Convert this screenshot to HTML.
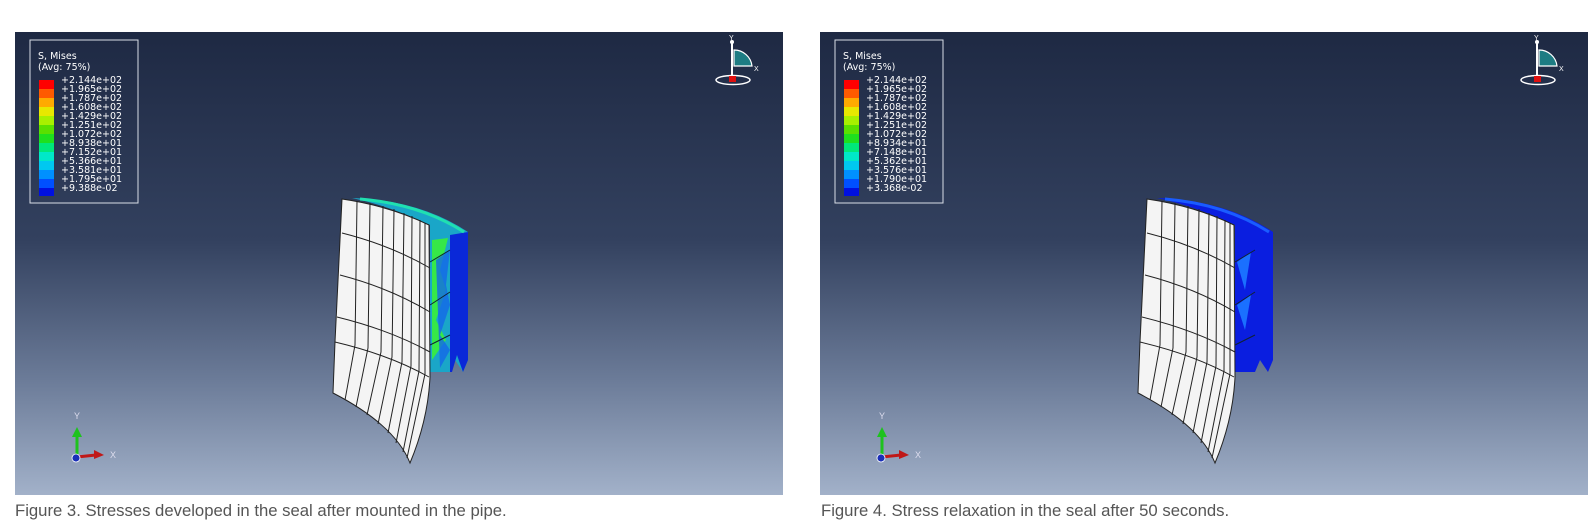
<!DOCTYPE html>
<html><head><meta charset="utf-8"><style>
html,body{margin:0;padding:0;background:#fff;}
body{width:1594px;height:523px;position:relative;overflow:hidden;}
svg{position:absolute;left:0;top:0;}
.cap{position:absolute;top:501px;font:16.7px "Liberation Sans",Arial,sans-serif;color:#555;white-space:nowrap;}
.lg{font:9.5px "DejaVu Sans","Liberation Sans",sans-serif;fill:#fff;}
</style></head><body>
<svg width="1594" height="523" viewBox="0 0 1594 523">
<defs>
<linearGradient id="bg" x1="0" y1="0" x2="0" y2="1">
<stop offset="0" stop-color="#1e2943"/>
<stop offset="0.45" stop-color="#33415f"/>
<stop offset="0.75" stop-color="#6b7b98"/>
<stop offset="1" stop-color="#a2b1c9"/>
</linearGradient>
<g id="sheet">
<path d="M342,199 Q390,206 429,225 L430,377 Q428,420 410,463 Q395,425 333,393 L335,342 Z" fill="#f4f4f4" stroke="#222" stroke-width="1"/>
<g stroke="#222" stroke-width="1" fill="none">
<path d="M342,233 Q390,245 430,268"/>
<path d="M340,275 Q390,288 430,312"/>
<path d="M337,317 Q390,330 430,352"/>
<path d="M335,342 Q390,355 429,377"/>
<path d="M357,201 L355,345 L345,400"/>
<path d="M370,203 L368,348 L356,407"/>
<path d="M383,206 L381,352 L367,415"/>
<path d="M394,209 L392,357 L378,424"/>
<path d="M404,213 L402,362 L388,433"/>
<path d="M412,216 L411,366 L396,443"/>
<path d="M420,220 L419,371 L403,452"/>
<path d="M425,223 L425,374 L407,458"/>
</g>
</g>
<g id="legendframe">
<rect x="30" y="40" width="108" height="163" fill="none" stroke="#d8dde6" stroke-width="1"/>
</g>
<g id="triads">
<line x1="732" y1="42" x2="732" y2="79" stroke="#fff" stroke-width="2"/>
<circle cx="732" cy="42" r="2" fill="#fff"/>
<path d="M734,50 A18,18 0 0 1 752,66 L734,66 Z" fill="#1d7c83" stroke="#fff" stroke-width="1.2"/>
<ellipse cx="733" cy="80" rx="17" ry="4.5" fill="none" stroke="#fff" stroke-width="1.5"/>
<rect x="729" y="76" width="7" height="6" fill="#e01010"/>
<text x="729" y="40" font-size="7" fill="#fff" font-family="Liberation Sans,sans-serif">Y</text>
<text x="754" y="71" font-size="7" fill="#fff" font-family="Liberation Sans,sans-serif">X</text>
<line x1="77" y1="457" x2="77" y2="436" stroke="#1ec21e" stroke-width="3"/>
<path d="M72,437 L77,427 L82,437 Z" fill="#1ec21e"/>
<line x1="77" y1="457" x2="96" y2="455" stroke="#c01818" stroke-width="3"/>
<path d="M94,450 L104,455 L94,459 Z" fill="#c01818"/>
<circle cx="76" cy="458" r="4" fill="#1a2fb8" stroke="#fff" stroke-width="0.8"/>
<text x="74" y="419" font-size="9" fill="#dde" font-family="Liberation Sans,sans-serif">Y</text>
<text x="110" y="458" font-size="9" fill="#dde" font-family="Liberation Sans,sans-serif">X</text>
</g>
</defs>

<rect x="15" y="32" width="768" height="463" fill="url(#bg)"/>
<use href="#legendframe"/>
<text class="lg" x="38" y="59">S, Mises</text>
<text class="lg" x="38" y="70">(Avg: 75%)</text>
<g>
<rect x="39" y="80" width="15" height="9" fill="#ff0000"/>
<rect x="39" y="89" width="15" height="9" fill="#ff5a00"/>
<rect x="39" y="98" width="15" height="9" fill="#ffaa00"/>
<rect x="39" y="107" width="15" height="9" fill="#e8e800"/>
<rect x="39" y="116" width="15" height="9" fill="#a8f000"/>
<rect x="39" y="125" width="15" height="9" fill="#5ae000"/>
<rect x="39" y="134" width="15" height="9" fill="#1ee01e"/>
<rect x="39" y="143" width="15" height="9" fill="#00e87a"/>
<rect x="39" y="152" width="15" height="9" fill="#00e8c8"/>
<rect x="39" y="161" width="15" height="9" fill="#00c8f0"/>
<rect x="39" y="170" width="15" height="9" fill="#0090ff"/>
<rect x="39" y="179" width="15" height="9" fill="#0050ff"/>
<rect x="39" y="188" width="15" height="8" fill="#0010e0"/>
</g>
<g class="lg">
<text x="61" y="83">+2.144e+02</text><text x="61" y="92">+1.965e+02</text><text x="61" y="101">+1.787e+02</text>
<text x="61" y="110">+1.608e+02</text><text x="61" y="119">+1.429e+02</text><text x="61" y="128">+1.251e+02</text>
<text x="61" y="137">+1.072e+02</text><text x="61" y="146">+8.938e+01</text><text x="61" y="155">+7.152e+01</text>
<text x="61" y="164">+5.366e+01</text><text x="61" y="173">+3.581e+01</text><text x="61" y="182">+1.795e+01</text>
<text x="61" y="191">+9.388e-02</text>
</g>
<path d="M352,198 Q420,200 468,232 L468,360 L463,372 L455,360 L450,372 L430,372 L430,225 Q390,206 352,198 Z" fill="#1aa6c8"/>
<path d="M450,235 L468,232 L468,360 L463,372 L457,355 L452,372 L450,372 Z" fill="#0a28d8"/>
<path d="M432,240 L448,238 L440,270 L446,290 L436,320 L446,340 L432,360 Z" fill="#36e848"/>
<path d="M436,260 L450,250 L446,285 L450,305 L440,335 L450,350 L440,368 Z" fill="#1468e8" opacity="0.8"/>
<path d="M360,199 Q420,204 464,232" stroke="#20e0b0" stroke-width="3" fill="none"/>
<path d="M430,262 L450,250 M430,305 L450,292 M430,345 L450,335" stroke="#123" stroke-width="1"/>
<use href="#sheet"/>
<use href="#triads"/>

<rect x="820" y="32" width="768" height="463" fill="url(#bg)"/>
<g transform="translate(805,0)">
<use href="#legendframe"/>
<use href="#triads"/>
</g>
<text class="lg" x="843" y="59">S, Mises</text>
<text class="lg" x="843" y="70">(Avg: 75%)</text>
<g transform="translate(805,0)">
<rect x="39" y="80" width="15" height="9" fill="#ff0000"/>
<rect x="39" y="89" width="15" height="9" fill="#ff5a00"/>
<rect x="39" y="98" width="15" height="9" fill="#ffaa00"/>
<rect x="39" y="107" width="15" height="9" fill="#e8e800"/>
<rect x="39" y="116" width="15" height="9" fill="#a8f000"/>
<rect x="39" y="125" width="15" height="9" fill="#5ae000"/>
<rect x="39" y="134" width="15" height="9" fill="#1ee01e"/>
<rect x="39" y="143" width="15" height="9" fill="#00e87a"/>
<rect x="39" y="152" width="15" height="9" fill="#00e8c8"/>
<rect x="39" y="161" width="15" height="9" fill="#00c8f0"/>
<rect x="39" y="170" width="15" height="9" fill="#0090ff"/>
<rect x="39" y="179" width="15" height="9" fill="#0050ff"/>
<rect x="39" y="188" width="15" height="8" fill="#0010e0"/>
</g>
<g class="lg">
<text x="866" y="83">+2.144e+02</text><text x="866" y="92">+1.965e+02</text><text x="866" y="101">+1.787e+02</text>
<text x="866" y="110">+1.608e+02</text><text x="866" y="119">+1.429e+02</text><text x="866" y="128">+1.251e+02</text>
<text x="866" y="137">+1.072e+02</text><text x="866" y="146">+8.934e+01</text><text x="866" y="155">+7.148e+01</text>
<text x="866" y="164">+5.362e+01</text><text x="866" y="173">+3.576e+01</text><text x="866" y="182">+1.790e+01</text>
<text x="866" y="191">+3.368e-02</text>
</g>
<g transform="translate(805,0)">
<path d="M352,198 Q420,200 468,232 L468,360 L463,372 L455,360 L450,372 L430,372 L430,225 Q390,206 352,198 Z" fill="#0a1ee0"/>
<path d="M432,262 L446,252 L440,290 Z M432,305 L446,295 L440,330 Z" fill="#1a70ff"/>
<path d="M360,199 Q420,204 464,232" stroke="#1a5cff" stroke-width="3" fill="none"/>
<path d="M430,262 L450,250 M430,305 L450,292 M430,345 L450,335" stroke="#123" stroke-width="1"/>
<use href="#sheet"/>
</g>
</svg>
<div class="cap" style="left:15px">Figure 3. Stresses developed in the seal after mounted in the pipe.</div>
<div class="cap" style="left:821px">Figure 4. Stress relaxation in the seal after 50 seconds.</div>
</body></html>
